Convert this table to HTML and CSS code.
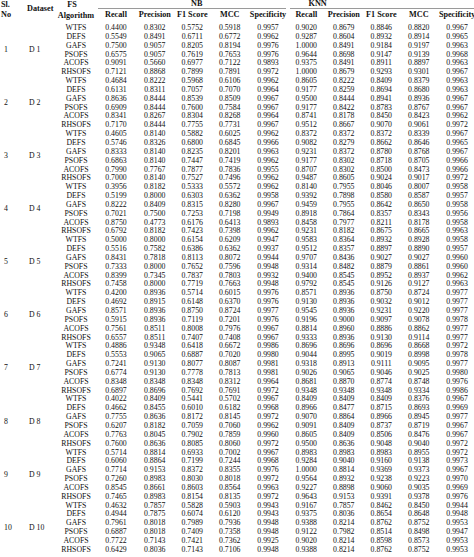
FILE: index.html
```html
<!DOCTYPE html>
<html lang="en">
<head>
<meta charset="utf-8">
<title>Results table</title>
<link rel="stylesheet" href="styles.css">
</head>
<body>
<table class="results">
<colgroup>
<col class="c-sl"><col class="c-ds"><col class="c-alg">
<col class="c-v1"><col class="c-v"><col class="c-v"><col class="c-v"><col class="c-v2">
<col class="c-v"><col class="c-v"><col class="c-v"><col class="c-v"><col class="c-v2">
</colgroup>
<thead>
<tr class="h1">
<th rowspan="2" class="sl">Sl.<br>No</th>
<th rowspan="2" class="ds">Dataset</th>
<th rowspan="2" class="alg"><span class="fs">FS</span><br>Algorithm</th>
<th colspan="5" class="grp"><div class="grp-label grp-nb">NB</div></th>
<th colspan="5" class="grp"><div class="grp-label grp-knn">KNN</div></th>
</tr>
<tr class="h2">
<th>Recall</th><th>Precision</th><th>F1 Score</th><th>MCC</th><th>Specificity</th>
<th>Recall</th><th>Precision</th><th>F1 Score</th><th>MCC</th><th>Specificity</th>
</tr>
</thead>
<tbody>
<tr><td rowspan="6" class="n">1</td><td rowspan="6" class="d">D 1</td><td class="a">WTFS</td><td>0.4400</td><td>0.8302</td><td>0.5752</td><td>0.5918</td><td>0.9957</td><td>0.9020</td><td>0.8679</td><td>0.8846</td><td>0.8820</td><td>0.9967</td></tr>
<tr><td class="a">DEFS</td><td>0.5549</td><td>0.8491</td><td>0.6711</td><td>0.6772</td><td>0.9962</td><td>0.9287</td><td>0.8604</td><td>0.8932</td><td>0.8914</td><td>0.9965</td></tr>
<tr><td class="a">GAFS</td><td>0.7500</td><td>0.9057</td><td>0.8205</td><td>0.8194</td><td>0.9976</td><td>1.0000</td><td>0.8491</td><td>0.9184</td><td>0.9197</td><td>0.9963</td></tr>
<tr><td class="a">PSOFS</td><td>0.6575</td><td>0.9057</td><td>0.7619</td><td>0.7653</td><td>0.9976</td><td>0.9644</td><td>0.8698</td><td>0.9147</td><td>0.9139</td><td>0.9968</td></tr>
<tr><td class="a">ACOFS</td><td>0.9091</td><td>0.5660</td><td>0.6977</td><td>0.7122</td><td>0.9893</td><td>0.9375</td><td>0.8491</td><td>0.8911</td><td>0.8897</td><td>0.9963</td></tr>
<tr><td class="a">RHSOFS</td><td>0.7121</td><td>0.8868</td><td>0.7899</td><td>0.7891</td><td>0.9972</td><td>1.0000</td><td>0.8679</td><td>0.9293</td><td>0.9301</td><td>0.9967</td></tr>

<tr><td rowspan="6" class="n">2</td><td rowspan="6" class="d">D 2</td><td class="a">WTFS</td><td>0.4684</td><td>0.8222</td><td>0.5968</td><td>0.6106</td><td>0.9962</td><td>0.8605</td><td>0.8222</td><td>0.8409</td><td>0.8379</td><td>0.9963</td></tr>
<tr><td class="a">DEFS</td><td>0.6131</td><td>0.8311</td><td>0.7057</td><td>0.7070</td><td>0.9964</td><td>0.9177</td><td>0.8259</td><td>0.8694</td><td>0.8680</td><td>0.9963</td></tr>
<tr><td class="a">GAFS</td><td>0.8636</td><td>0.8444</td><td>0.8539</td><td>0.8509</td><td>0.9967</td><td>0.9500</td><td>0.8444</td><td>0.8941</td><td>0.8936</td><td>0.9967</td></tr>
<tr><td class="a">PSOFS</td><td>0.6909</td><td>0.8444</td><td>0.7600</td><td>0.7584</td><td>0.9967</td><td>0.9177</td><td>0.8422</td><td>0.8783</td><td>0.8767</td><td>0.9967</td></tr>
<tr><td class="a">ACOFS</td><td>0.8341</td><td>0.8267</td><td>0.8304</td><td>0.8268</td><td>0.9964</td><td>0.8741</td><td>0.8178</td><td>0.8450</td><td>0.8423</td><td>0.9962</td></tr>
<tr><td class="a">RHSOFS</td><td>0.7170</td><td>0.8444</td><td>0.7755</td><td>0.7731</td><td>0.9967</td><td>0.9512</td><td>0.8667</td><td>0.9070</td><td>0.9061</td><td>0.9972</td></tr>

<tr><td rowspan="6" class="n">3</td><td rowspan="6" class="d">D 3</td><td class="a">WTFS</td><td>0.4605</td><td>0.8140</td><td>0.5882</td><td>0.6025</td><td>0.9962</td><td>0.8372</td><td>0.8372</td><td>0.8372</td><td>0.8339</td><td>0.9967</td></tr>
<tr><td class="a">DEFS</td><td>0.5746</td><td>0.8326</td><td>0.6800</td><td>0.6845</td><td>0.9966</td><td>0.9082</td><td>0.8279</td><td>0.8662</td><td>0.8646</td><td>0.9965</td></tr>
<tr><td class="a">GAFS</td><td>0.8333</td><td>0.8140</td><td>0.8235</td><td>0.8201</td><td>0.9963</td><td>0.9231</td><td>0.8372</td><td>0.8780</td><td>0.8768</td><td>0.9967</td></tr>
<tr><td class="a">PSOFS</td><td>0.6863</td><td>0.8140</td><td>0.7447</td><td>0.7419</td><td>0.9962</td><td>0.9177</td><td>0.8302</td><td>0.8718</td><td>0.8705</td><td>0.9966</td></tr>
<tr><td class="a">ACOFS</td><td>0.7990</td><td>0.7767</td><td>0.7877</td><td>0.7836</td><td>0.9955</td><td>0.8707</td><td>0.8302</td><td>0.8500</td><td>0.8473</td><td>0.9966</td></tr>
<tr><td class="a">RHSOFS</td><td>0.7000</td><td>0.8140</td><td>0.7527</td><td>0.7496</td><td>0.9962</td><td>0.9487</td><td>0.8605</td><td>0.9024</td><td>0.9017</td><td>0.9972</td></tr>

<tr><td rowspan="6" class="n">4</td><td rowspan="6" class="d">D 4</td><td class="a">WTFS</td><td>0.3956</td><td>0.8182</td><td>0.5333</td><td>0.5572</td><td>0.9962</td><td>0.8140</td><td>0.7955</td><td>0.8046</td><td>0.8007</td><td>0.9958</td></tr>
<tr><td class="a">DEFS</td><td>0.5199</td><td>0.8000</td><td>0.6303</td><td>0.6362</td><td>0.9958</td><td>0.9392</td><td>0.7898</td><td>0.8580</td><td>0.8587</td><td>0.9957</td></tr>
<tr><td class="a">GAFS</td><td>0.8222</td><td>0.8409</td><td>0.8315</td><td>0.8280</td><td>0.9967</td><td>0.9459</td><td>0.7955</td><td>0.8642</td><td>0.8650</td><td>0.9958</td></tr>
<tr><td class="a">PSOFS</td><td>0.7021</td><td>0.7500</td><td>0.7253</td><td>0.7198</td><td>0.9949</td><td>0.8918</td><td>0.7864</td><td>0.8357</td><td>0.8343</td><td>0.9956</td></tr>
<tr><td class="a">ACOFS</td><td>0.8750</td><td>0.4773</td><td>0.6176</td><td>0.6413</td><td>0.9893</td><td>0.8458</td><td>0.7977</td><td>0.8211</td><td>0.8178</td><td>0.9958</td></tr>
<tr><td class="a">RHSOFS</td><td>0.6792</td><td>0.8182</td><td>0.7423</td><td>0.7398</td><td>0.9962</td><td>0.9231</td><td>0.8182</td><td>0.8675</td><td>0.8665</td><td>0.9963</td></tr>

<tr><td rowspan="6" class="n">5</td><td rowspan="6" class="d">D 5</td><td class="a">WTFS</td><td>0.5000</td><td>0.8000</td><td>0.6154</td><td>0.6209</td><td>0.9947</td><td>0.9583</td><td>0.8364</td><td>0.8932</td><td>0.8928</td><td>0.9958</td></tr>
<tr><td class="a">DEFS</td><td>0.5516</td><td>0.7582</td><td>0.6386</td><td>0.6362</td><td>0.9937</td><td>0.9512</td><td>0.8357</td><td>0.8897</td><td>0.8890</td><td>0.9957</td></tr>
<tr><td class="a">GAFS</td><td>0.8431</td><td>0.7818</td><td>0.8113</td><td>0.8072</td><td>0.9944</td><td>0.9707</td><td>0.8436</td><td>0.9027</td><td>0.9027</td><td>0.9960</td></tr>
<tr><td class="a">PSOFS</td><td>0.7333</td><td>0.8000</td><td>0.7652</td><td>0.7596</td><td>0.9948</td><td>0.9314</td><td>0.8482</td><td>0.8879</td><td>0.8861</td><td>0.9960</td></tr>
<tr><td class="a">ACOFS</td><td>0.8399</td><td>0.7345</td><td>0.7837</td><td>0.7803</td><td>0.9932</td><td>0.9400</td><td>0.8545</td><td>0.8952</td><td>0.8937</td><td>0.9962</td></tr>
<tr><td class="a">RHSOFS</td><td>0.7458</td><td>0.8000</td><td>0.7719</td><td>0.7663</td><td>0.9948</td><td>0.9792</td><td>0.8545</td><td>0.9126</td><td>0.9127</td><td>0.9963</td></tr>

<tr><td rowspan="6" class="n">6</td><td rowspan="6" class="d">D 6</td><td class="a">WTFS</td><td>0.4200</td><td>0.8936</td><td>0.5714</td><td>0.6015</td><td>0.9976</td><td>0.8571</td><td>0.8936</td><td>0.8750</td><td>0.8724</td><td>0.9977</td></tr>
<tr><td class="a">DEFS</td><td>0.4692</td><td>0.8915</td><td>0.6148</td><td>0.6370</td><td>0.9976</td><td>0.9130</td><td>0.8936</td><td>0.9032</td><td>0.9012</td><td>0.9977</td></tr>
<tr><td class="a">GAFS</td><td>0.8571</td><td>0.8936</td><td>0.8750</td><td>0.8724</td><td>0.9977</td><td>0.9545</td><td>0.8936</td><td>0.9231</td><td>0.9220</td><td>0.9977</td></tr>
<tr><td class="a">PSOFS</td><td>0.5915</td><td>0.8936</td><td>0.7119</td><td>0.7201</td><td>0.9976</td><td>0.9196</td><td>0.9000</td><td>0.9097</td><td>0.9078</td><td>0.9978</td></tr>
<tr><td class="a">ACOFS</td><td>0.7561</td><td>0.8511</td><td>0.8008</td><td>0.7976</td><td>0.9967</td><td>0.8814</td><td>0.8960</td><td>0.8886</td><td>0.8862</td><td>0.9977</td></tr>
<tr><td class="a">RHSOFS</td><td>0.6557</td><td>0.8511</td><td>0.7407</td><td>0.7408</td><td>0.9967</td><td>0.9333</td><td>0.8936</td><td>0.9130</td><td>0.9114</td><td>0.9977</td></tr>

<tr><td rowspan="6" class="n">7</td><td rowspan="6" class="d">D 7</td><td class="a">WTFS</td><td>0.4886</td><td>0.9348</td><td>0.6418</td><td>0.6672</td><td>0.9986</td><td>0.8696</td><td>0.8696</td><td>0.8696</td><td>0.8668</td><td>0.9972</td></tr>
<tr><td class="a">DEFS</td><td>0.5553</td><td>0.9065</td><td>0.6887</td><td>0.7020</td><td>0.9980</td><td>0.9044</td><td>0.8995</td><td>0.9019</td><td>0.8998</td><td>0.9978</td></tr>
<tr><td class="a">GAFS</td><td>0.7241</td><td>0.9130</td><td>0.8077</td><td>0.8087</td><td>0.9981</td><td>0.9318</td><td>0.8913</td><td>0.9111</td><td>0.9095</td><td>0.9977</td></tr>
<tr><td class="a">PSOFS</td><td>0.6774</td><td>0.9130</td><td>0.7778</td><td>0.7813</td><td>0.9981</td><td>0.9026</td><td>0.9065</td><td>0.9046</td><td>0.9025</td><td>0.9980</td></tr>
<tr><td class="a">ACOFS</td><td>0.8348</td><td>0.8348</td><td>0.8348</td><td>0.8312</td><td>0.9964</td><td>0.8681</td><td>0.8870</td><td>0.8774</td><td>0.8748</td><td>0.9976</td></tr>
<tr><td class="a">RHSOFS</td><td>0.6897</td><td>0.8696</td><td>0.7692</td><td>0.7691</td><td>0.9972</td><td>0.9348</td><td>0.9348</td><td>0.9348</td><td>0.9334</td><td>0.9986</td></tr>

<tr><td rowspan="6" class="n">8</td><td rowspan="6" class="d">D 8</td><td class="a">WTFS</td><td>0.4022</td><td>0.8409</td><td>0.5441</td><td>0.5702</td><td>0.9967</td><td>0.8409</td><td>0.8409</td><td>0.8409</td><td>0.8376</td><td>0.9967</td></tr>
<tr><td class="a">DEFS</td><td>0.4662</td><td>0.8455</td><td>0.6010</td><td>0.6182</td><td>0.9968</td><td>0.8966</td><td>0.8477</td><td>0.8715</td><td>0.8693</td><td>0.9969</td></tr>
<tr><td class="a">GAFS</td><td>0.7755</td><td>0.8636</td><td>0.8172</td><td>0.8145</td><td>0.9972</td><td>0.9070</td><td>0.8864</td><td>0.8966</td><td>0.8945</td><td>0.9977</td></tr>
<tr><td class="a">PSOFS</td><td>0.6207</td><td>0.8182</td><td>0.7059</td><td>0.7060</td><td>0.9962</td><td>0.9091</td><td>0.8409</td><td>0.8737</td><td>0.8719</td><td>0.9967</td></tr>
<tr><td class="a">ACOFS</td><td>0.7763</td><td>0.8045</td><td>0.7902</td><td>0.7859</td><td>0.9960</td><td>0.8605</td><td>0.8409</td><td>0.8506</td><td>0.8476</td><td>0.9967</td></tr>
<tr><td class="a">RHSOFS</td><td>0.7600</td><td>0.8636</td><td>0.8085</td><td>0.8060</td><td>0.9972</td><td>0.9500</td><td>0.8636</td><td>0.9048</td><td>0.9040</td><td>0.9972</td></tr>

<tr><td rowspan="6" class="n">9</td><td rowspan="6" class="d">D 9</td><td class="a">WTFS</td><td>0.5714</td><td>0.8814</td><td>0.6933</td><td>0.7002</td><td>0.9967</td><td>0.8983</td><td>0.8983</td><td>0.8983</td><td>0.8955</td><td>0.9972</td></tr>
<tr><td class="a">DEFS</td><td>0.6060</td><td>0.8864</td><td>0.7199</td><td>0.7244</td><td>0.9968</td><td>0.9284</td><td>0.9040</td><td>0.9160</td><td>0.9138</td><td>0.9973</td></tr>
<tr><td class="a">GAFS</td><td>0.7714</td><td>0.9153</td><td>0.8372</td><td>0.8355</td><td>0.9976</td><td>1.0000</td><td>0.8814</td><td>0.9369</td><td>0.9373</td><td>0.9967</td></tr>
<tr><td class="a">PSOFS</td><td>0.7260</td><td>0.8983</td><td>0.8030</td><td>0.8018</td><td>0.9972</td><td>0.9564</td><td>0.8932</td><td>0.9238</td><td>0.9223</td><td>0.9970</td></tr>
<tr><td class="a">ACOFS</td><td>0.8545</td><td>0.8661</td><td>0.8603</td><td>0.8564</td><td>0.9963</td><td>0.9227</td><td>0.8898</td><td>0.9060</td><td>0.9035</td><td>0.9969</td></tr>
<tr><td class="a">RHSOFS</td><td>0.7465</td><td>0.8983</td><td>0.8154</td><td>0.8135</td><td>0.9972</td><td>0.9643</td><td>0.9153</td><td>0.9391</td><td>0.9378</td><td>0.9976</td></tr>

<tr><td rowspan="6" class="n">10</td><td rowspan="6" class="d">D 10</td><td class="a">WTFS</td><td>0.4632</td><td>0.7857</td><td>0.5828</td><td>0.5903</td><td>0.9943</td><td>0.9167</td><td>0.7857</td><td>0.8462</td><td>0.8450</td><td>0.9944</td></tr>
<tr><td class="a">DEFS</td><td>0.4944</td><td>0.7875</td><td>0.6074</td><td>0.6120</td><td>0.9943</td><td>0.9375</td><td>0.8036</td><td>0.8654</td><td>0.8648</td><td>0.9948</td></tr>
<tr><td class="a">GAFS</td><td>0.7961</td><td>0.8018</td><td>0.7989</td><td>0.7936</td><td>0.9948</td><td>0.9388</td><td>0.8214</td><td>0.8762</td><td>0.8752</td><td>0.9953</td></tr>
<tr><td class="a">PSOFS</td><td>0.6887</td><td>0.8018</td><td>0.7409</td><td>0.7358</td><td>0.9948</td><td>0.9122</td><td>0.7982</td><td>0.8514</td><td>0.8498</td><td>0.9947</td></tr>
<tr><td class="a">ACOFS</td><td>0.7722</td><td>0.7143</td><td>0.7421</td><td>0.7362</td><td>0.9925</td><td>0.9020</td><td>0.8214</td><td>0.8598</td><td>0.8573</td><td>0.9953</td></tr>
<tr><td class="a">RHSOFS</td><td>0.6429</td><td>0.8036</td><td>0.7143</td><td>0.7106</td><td>0.9948</td><td>0.9388</td><td>0.8214</td><td>0.8762</td><td>0.8752</td><td>0.9953</td></tr>
</tbody>
</table>
</body>
</html>
```
FILE: styles.css
```css
html, body {
  margin: 0;
  padding: 0;
  background: #ffffff;
  overflow: hidden;
}

body {
  width: 474px;
  height: 557px;
  font-family: "Liberation Serif", "Times New Roman", serif;
  color: #111;
}

.results {
  table-layout: fixed;
  width: 475px;
  border-collapse: separate;
  border-spacing: 0;
}

.c-sl { width: 20px; }
.c-ds { width: 36px; }
.c-alg { width: 40px; }
.c-v1 { width: 40px; }
.c-v { width: 37.5px; }
.c-v2 { width: 39px; }

.results th {
  font-weight: bold;
  font-size: 8.2px;
  color: #111;
  padding: 0;
  text-align: center;
  white-space: nowrap;
}

.results th.sl {
  text-align: left;
  vertical-align: top;
  line-height: 10px;
  padding-left: 1px;
}

.results th.ds {
  vertical-align: top;
  line-height: 10px;
  padding-top: 4px;
  text-align: left;
  padding-left: 7px;
}

.results th.alg {
  vertical-align: top;
  line-height: 10.5px;
}

.fs {
  margin-right: 8px;
}

.h1 th.grp {
  height: 9px;
  vertical-align: top;
}

.grp-label {
  line-height: 7px;
  height: 8px;
  border-bottom: 1px solid #9a9a9a;
  margin: 0 2px;
}

.grp-nb {
  padding-left: 10px;
}

.grp-knn {
  text-align: left;
  padding-left: 19px;
}

.h2 th {
  height: 15px;
  line-height: 12px;
  vertical-align: top;
}

.results td {
  font-size: 7.8px;
  height: 8.85px;
  line-height: 8.85px;
  padding: 0;
  text-align: center;
  white-space: nowrap;
  color: #111;
}

.results td.n {
  text-align: left;
  padding-left: 4px;
  vertical-align: middle;
}

.results td.d {
  vertical-align: middle;
  text-align: left;
  padding-left: 9px;
}
```
